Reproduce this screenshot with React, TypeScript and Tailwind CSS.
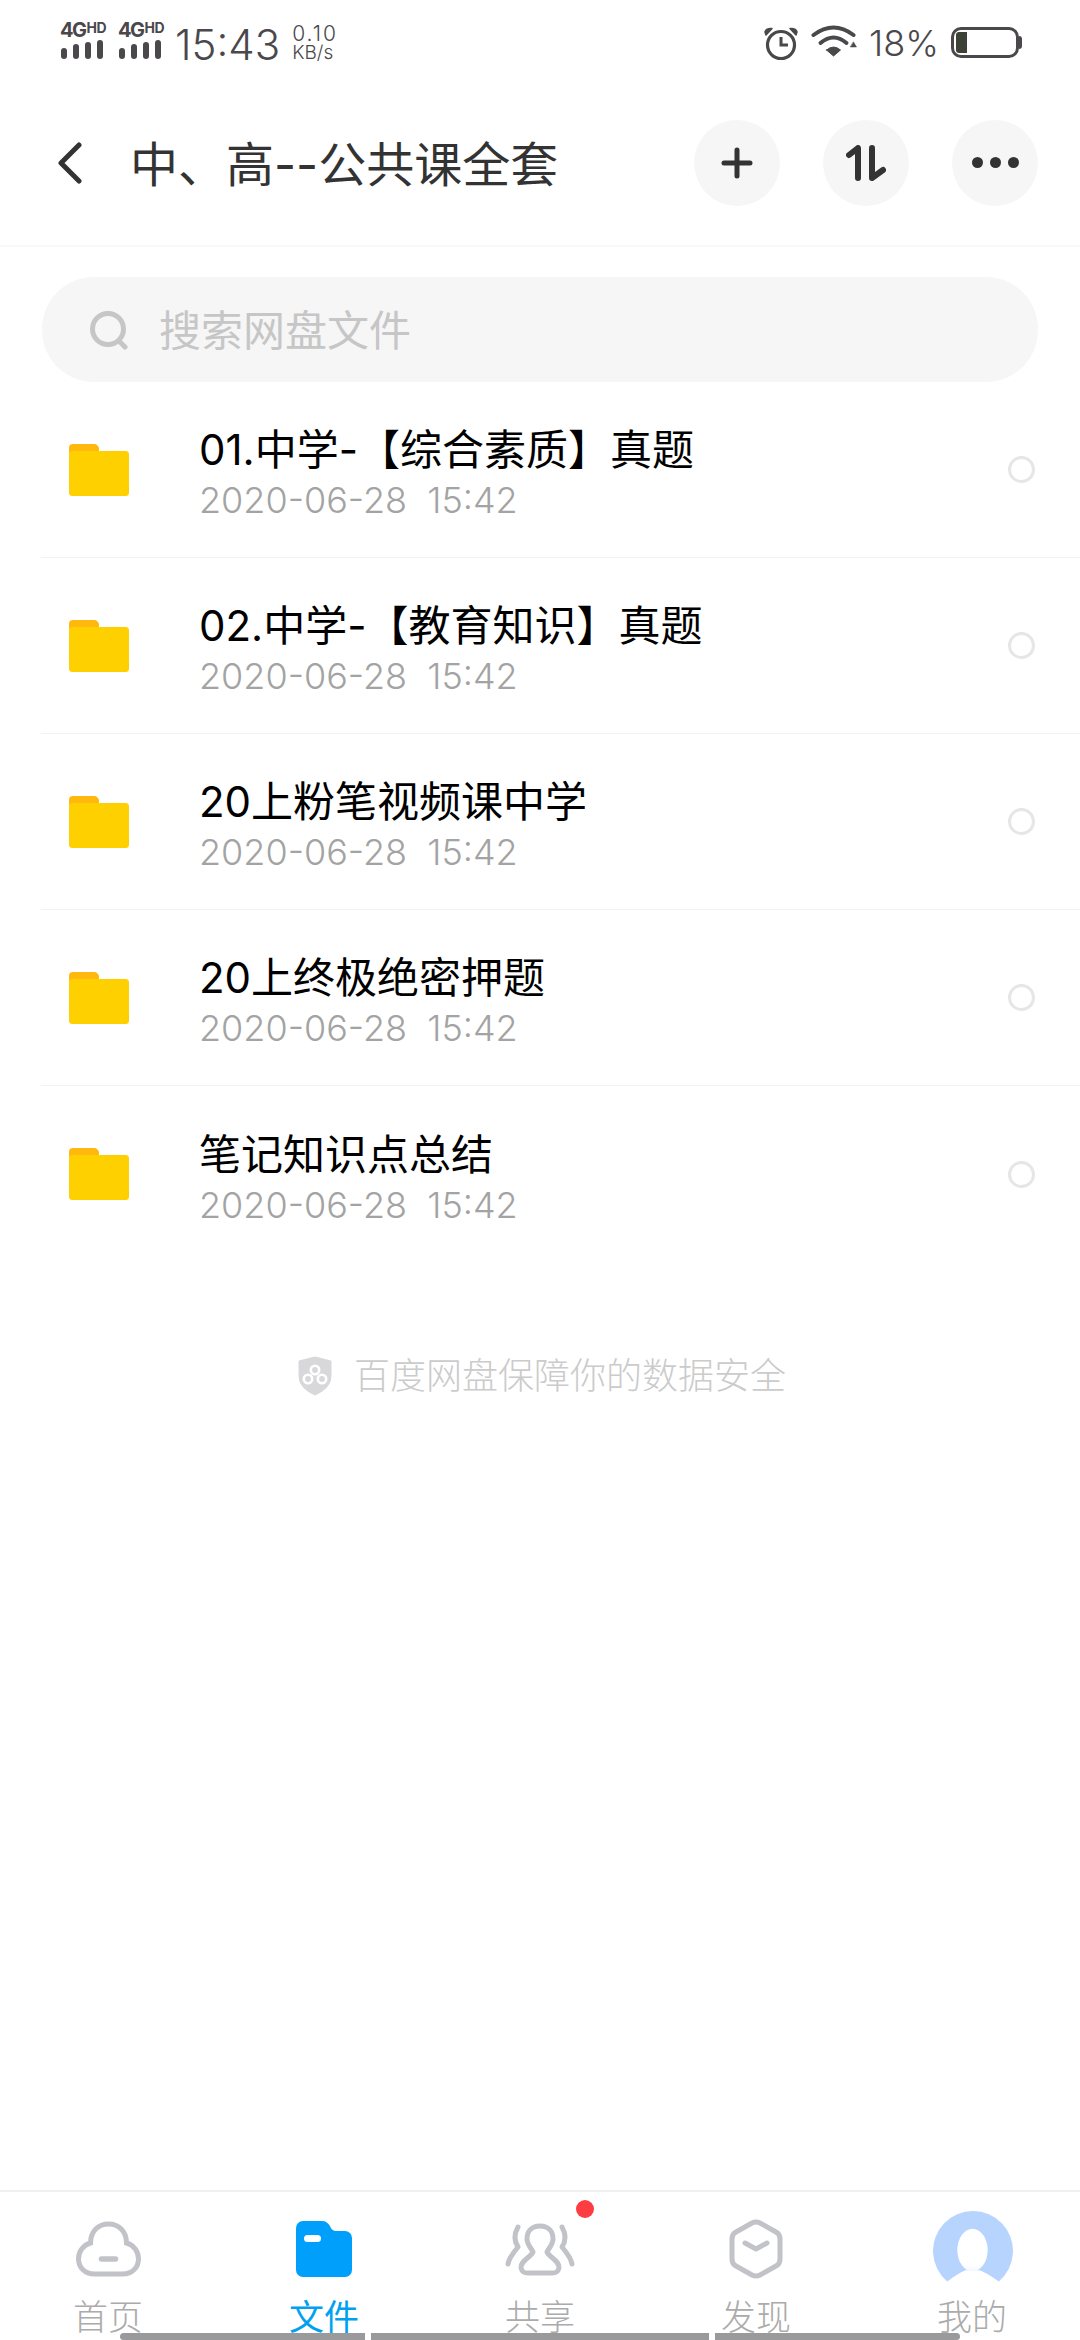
const files = ["01.中学-【综合素质】真题", "02.中学-【教育知识】真题", "20上粉笔视频课中学", "20上终极绝密押题", "笔记知识点总结"];

function Signal() {
  return (
    <div className="flex w-[45px] flex-col text-[#4a484b]">
      <div className="flex h-[17px] items-start font-bold leading-none">
        <span className="text-[20px] leading-[17px] tracking-[-1.5px]">4G</span>
        <span className="ml-[1px] text-[14px] leading-[11px] tracking-[-0.5px]">HD</span>
      </div>
      <div className="mt-[1px] flex h-[19px] items-end gap-[6px] pl-[1px]">
        <div className="h-[11px] w-[6px] rounded-full bg-[#4a484b]" />
        <div className="h-[15px] w-[6px] rounded-full bg-[#4a484b]" />
        <div className="h-[17px] w-[6px] rounded-full bg-[#4a484b]" />
        <div className="h-[19px] w-[6px] rounded-full bg-[#4a484b]" />
      </div>
    </div>
  );
}

function StatusBar() {
  return (
    <div className="flex h-[82px] items-start justify-between px-[60px] pt-[22px] text-[#4a484b]">
      <div className="flex items-start">
        <Signal />
        <div className="ml-[13px]"><Signal /></div>
        <span className="ml-[12px] mt-[2px] text-[42px] font-light leading-[42px]">15:43</span>
        <div className="ml-[12px] mt-[2px] flex flex-col font-light">
          <span className="text-[21px] leading-[19px] tracking-[2px]">0.10</span>
          <span className="mt-[1px] text-[19px] leading-[17px]">KB/s</span>
        </div>
      </div>
      <div className="-mr-[2px] flex items-start">
        <svg width="36" height="36" viewBox="0 0 36 36" className="mt-[3px]" fill="none" stroke="#4a484b">
          <circle cx="18" cy="20" r="13.5" strokeWidth="3.2" />
          <path d="M18 12v8h7" strokeWidth="3" />
          <path d="M3 10 L9 3.5 Q3 3 2 7Z M33 10 L27 3.5 Q33 3 34 7Z" fill="#4a484b" strokeWidth="1.5" strokeLinejoin="round" />
        </svg>
        <svg width="47" height="36" viewBox="0 0 46 36" className="ml-[12px] mt-[1px]" fill="none" stroke="#4a484b" strokeLinecap="round">
          <path d="M2 12 Q22 -3 42 12" strokeWidth="4" />
          <path d="M9 20 Q22 9 35 20" strokeWidth="4" />
          <path d="M15 27 L22 33 L29 27 Q22 21 15 27Z" fill="#4a484b" stroke="#4a484b" strokeWidth="1" />
          <path d="M39 24 L45 24 L42 19Z" fill="#4a484b" strokeWidth="0.5" />
        </svg>
        <span className="ml-[11px] mt-[1px] text-[36px] font-light leading-[40px]">18%</span>
        <div className="ml-[12px] mt-[5px] flex items-center">
          <div className="h-[31px] w-[68px] rounded-[10px] border-[3px] border-[#4a484b] p-[2px]">
            <div className="h-full w-[11px] rounded-l-[3px] bg-[#3c4336]" />
          </div>
          <div className="h-[13px] w-[3px] rounded-r-full bg-[#4a484b]" />
        </div>
      </div>
    </div>
  );
}

function Header() {
  return (
    <div className="flex h-[165px] items-center border-b-2 border-[#f8f8f8] pb-[2px] pl-[58px] pr-[42px]">
      <svg width="24" height="42" viewBox="0 0 24 42" fill="none" stroke="#333" strokeWidth="5" strokeLinecap="round" strokeLinejoin="round">
        <path d="M21 3 L3 21 L21 39" />
      </svg>
      <h1 className="ml-[48px] flex-1 pt-[4px] text-[48px] font-normal leading-[60px] text-[#333]">中、高--公共课全套</h1>
      <div className="flex gap-[43px]">
        <div className="flex h-[86px] w-[86px] items-center justify-center rounded-full bg-[#f6f6f6]">
          <svg width="32" height="32" viewBox="0 0 32 32" stroke="#333" strokeWidth="5" strokeLinecap="round">
            <path d="M16 3v26M3 16h26" />
          </svg>
        </div>
        <div className="flex h-[86px] w-[86px] items-center justify-center rounded-full bg-[#f6f6f6]">
          <svg width="40" height="36" viewBox="0 0 40 36" fill="none" stroke="#333" strokeWidth="6" strokeLinecap="round" strokeLinejoin="round">
            <path d="M3 10 L12 3 V33" />
            <path d="M26 3 V33 L37 25" />
          </svg>
        </div>
        <div className="flex h-[86px] w-[86px] items-center justify-center gap-[7px] rounded-full bg-[#f6f6f6]">
          <div className="h-[11px] w-[11px] rounded-full bg-[#333]" />
          <div className="h-[11px] w-[11px] rounded-full bg-[#333]" />
          <div className="h-[11px] w-[11px] rounded-full bg-[#333]" />
        </div>
      </div>
    </div>
  );
}

function SearchBar() {
  return (
    <div className="mx-[42px] mt-[30px] flex h-[105px] items-center rounded-[52px] bg-[#f6f6f6] pl-[47px]">
      <svg width="40" height="40" viewBox="0 0 38 40" fill="none" stroke="#c6c6c6" strokeWidth="5" strokeLinecap="round">
        <circle cx="18" cy="19" r="15.5" />
        <path d="M29 31l6 6" />
      </svg>
      <span className="ml-[30px] pt-[3px] text-[42px] leading-[56px] text-[#c6c6c6]">搜索网盘文件</span>
    </div>
  );
}

function FolderIcon() {
  return (
    <svg width="60" height="52" viewBox="0 0 60 52">
      <path d="M0 4a4 4 0 0 1 4-4h21a5 5 0 0 1 5 5v4H0z" fill="#ffb80d" />
      <rect x="0" y="7" width="60" height="45" rx="3.5" fill="#ffd000" />
    </svg>
  );
}

function FileRow({ name }: { name: string }) {
  return (
    <div className="ml-[41px] flex h-[176px] items-center border-b border-[#f2f2f2] pl-[28px] pr-[45px] last:border-b-0">
      <FolderIcon />
      <div className="ml-[70px] flex flex-1 flex-col pt-[13px]">
        <span className="text-[42px] leading-[49px] text-black">{name}</span>
        <span className="whitespace-pre text-[36px] font-light leading-[53px] text-[#a3a3a3]">2020-06-28  15:42</span>
      </div>
      <div className="h-[27px] w-[27px] rounded-full border-[3px] border-[#e6e6e6]" />
    </div>
  );
}

function SafeNote() {
  return (
    <div className="mt-[89px] flex items-center justify-center pl-[4px]">
      <svg width="34" height="40" viewBox="0 0 34 40">
        <path d="M17 1 L33 5 V20 Q33 32 17 39 Q1 32 1 20 V5Z" fill="#d8d8da" stroke="#d8d8da" strokeLinejoin="round" />
        <circle cx="17" cy="14" r="4.2" fill="none" stroke="#fff" strokeWidth="2.6" />
        <circle cx="10" cy="23" r="4.2" fill="none" stroke="#fff" strokeWidth="2.6" />
        <circle cx="24" cy="23" r="4.2" fill="none" stroke="#fff" strokeWidth="2.6" />
      </svg>
      <span className="ml-[22px] text-[36px] font-light leading-[50px] text-[#cbcbcb]">百度网盘保障你的数据安全</span>
    </div>
  );
}

function Tab({ label, active, children }: { label: string; active?: boolean; children: React.ReactNode }) {
  return (
    <div className="relative flex flex-col items-center">
      <div className="flex h-[114px] items-center justify-center">{children}</div>
      <span className={active ? "-mt-[9px] text-[35px] leading-[40px] text-[#00a2f0]" : "-mt-[9px] text-[35px] font-light leading-[40px] text-[#ababab]"}>{label}</span>
    </div>
  );
}

function TabBar() {
  return (
    <div className="relative grid h-[150px] grid-cols-5 border-t-2 border-[#f0f0f0] bg-white">
      <Tab label="首页">
        <svg width="67" height="56" viewBox="0 0 66 56" fill="none" stroke="#c2c3c8" strokeWidth="5">
          <path d="M19 53 H47 C57 53 63 46 63 38 C63 30 58 24 51 22 C51 10 43 3 33 3 C23 3 15 10 15 22 C8 24 3 30 3 38 C3 46 9 53 19 53Z" />
          <path d="M26 38h14" strokeWidth="5.5" strokeLinecap="round" />
        </svg>
      </Tab>
      <Tab label="文件" active>
        <svg width="56" height="56" viewBox="0 0 56 56">
          <path d="M0 7a7 7 0 0 1 7-7h19c4 0 6 2 8 5 1 3 3 5 7 5h8a7 7 0 0 1 7 7v32a7 7 0 0 1-7 7H7a7 7 0 0 1-7-7z" fill="#009ffc" />
          <rect x="8" y="14" width="17" height="7" rx="3.5" fill="#fff" />
        </svg>
      </Tab>
      <Tab label="共享">
        <svg width="70" height="56" viewBox="0 0 70 56" fill="none" stroke="#c2c3c8" strokeWidth="5" strokeLinecap="round" strokeLinejoin="round">
          <path d="M35 5 C26 5 22 11 22 18 C22 24 27 28 28 31 C26 36 15 40 16 47 C17 51 19 52 23 52 H47 C51 52 53 51 54 47 C55 40 44 36 42 31 C43 28 48 24 48 18 C48 11 44 5 35 5Z" />
          <path d="M13 6 C9 13 9 20 13 26 C8 32 4 37 3 43" />
          <path d="M57 6 C61 13 61 20 57 26 C62 32 66 37 67 43" />
        </svg>
        <div className="absolute left-[144px] top-[8px] h-[18px] w-[18px] rounded-full bg-[#fe3d42]" />
      </Tab>
      <Tab label="发现">
        <svg width="54" height="60" viewBox="0 0 54 60" fill="none" stroke="#c2c3c8" strokeWidth="5" strokeLinejoin="round" strokeLinecap="round">
          <path d="M23 4 Q27 2 31 4 L47 13 Q51 15 51 20 V40 Q51 45 47 47 L31 56 Q27 58 23 56 L7 47 Q3 45 3 40 V20 Q3 15 7 13Z" />
          <path d="M16 24 L27 30 L38 24" />
        </svg>
      </Tab>
      <Tab label="我的">
        <svg width="81" height="74" viewBox="0 0 80 72" className="-mt-[7px]">
          <defs>
            <linearGradient id="avatarFade" x1="0" y1="0" x2="0" y2="1">
              <stop offset="0.85" stopColor="#fff" />
              <stop offset="1" stopColor="#f3f7ff" />
            </linearGradient>
          </defs>
          <path d="M15 71 A39.5 39.5 0 1 1 66 71 Q53 62 47 60 L33 60 Q26 63 15 71Z" fill="#b6d4fd" />
          <ellipse cx="40" cy="40" rx="15" ry="21" fill="url(#avatarFade)" />
        </svg>
      </Tab>
      <div className="absolute bottom-0 left-[120px] flex h-[7px] gap-[6px]">
        <div className="w-[245px] rounded-l-full bg-[#9a999b]" />
        <div className="w-[338px] bg-[#9a999b]" />
        <div className="w-[245px] rounded-r-full bg-[#9a999b]" />
      </div>
    </div>
  );
}

export default function App() {
  return (
    <div className="flex h-[2340px] w-[1080px] flex-col overflow-hidden bg-white font-['Inter','Noto_Sans_CJK_SC',sans-serif]">
      <StatusBar />
      <Header />
      <SearchBar />
      <div>
        {files.map((name) => (
          <FileRow key={name} name={name} />
        ))}
      </div>
      <SafeNote />
      <div className="flex-1" />
      <TabBar />
    </div>
  );
}
